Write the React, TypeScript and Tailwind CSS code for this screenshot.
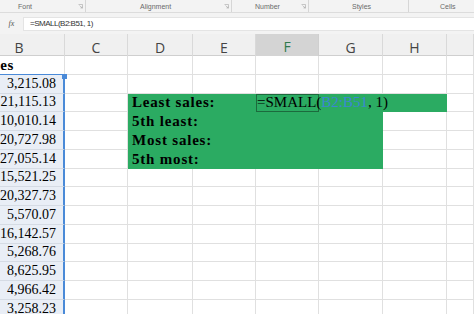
import React from "react";

const Launcher = () => (
  <svg width="5" height="5" viewBox="0 0 5 5" className="block">
    <path d="M0.5 0.5 H4.5 V4.5" fill="none" stroke="#a8a8a8" strokeWidth="0.6" />
    <path d="M1.5 1.5 L4 4 M2.5 4 H4 V2.5" fill="none" stroke="#a8a8a8" strokeWidth="0.6" />
  </svg>
);

function Ribbon() {
  return (
    <div className="h-[13px] shrink-0 bg-[#f3f3f3] border-b border-[#dcdcdc] flex items-center text-[7px] leading-[7px] text-[#6a6a6a] font-['Liberation_Sans',sans-serif]">
      <div className="w-[86px] h-full flex items-center border-r border-[#d6d6d6]">
        <span className="ml-[18px]">Font</span>
        <div className="flex-1" />
        <div className="mr-[2px]"><Launcher /></div>
      </div>
      <div className="w-[146px] h-full flex items-center border-r border-[#d6d6d6]">
        <span className="ml-[54px]">Alignment</span>
        <div className="flex-1" />
        <div className="mr-[2px]"><Launcher /></div>
      </div>
      <div className="w-[77px] h-full flex items-center border-r border-[#d6d6d6]">
        <span className="ml-[23px]">Number</span>
        <div className="flex-1" />
        <div className="mr-[2px]"><Launcher /></div>
      </div>
      <div className="w-[100px] h-full flex items-center border-r border-[#d6d6d6]">
        <span className="ml-[43px]">Styles</span>
      </div>
      <div className="flex-1 h-full flex items-center">
        <span className="ml-[31px]">Cells</span>
      </div>
    </div>
  );
}

function FormulaBar() {
  return (
    <div className="h-[21px] shrink-0 bg-[#f3f3f3] flex items-start pt-[4px]">
      <div className="w-[23px] h-[14px] flex items-center justify-center">
        <span className="italic text-[8px] leading-[8px] text-[#555] font-['Liberation_Serif',serif]">fx</span>
      </div>
      <div className="flex-1 h-[14px] bg-white border-y border-l border-[#e4e4e4] flex items-center pl-[6px]">
        <span className="text-[8px] leading-[8px] tracking-[-0.5px] text-[#333] font-['Liberation_Sans',sans-serif]">
          =SMALL(B2:B51, 1)
        </span>
      </div>
    </div>
  );
}

const HEAD = ["B", "C", "D", "E", "F", "G", "H", ""];

const NUMS: Record<number, string> = {
  2: "3,215.08",
  3: "21,115.13",
  4: "10,010.14",
  5: "20,727.98",
  6: "27,055.14",
  7: "15,521.25",
  8: "20,327.73",
  9: "5,570.07",
  10: "16,142.57",
  11: "5,268.76",
  12: "8,625.95",
  13: "4,966.42",
  14: "3,258.23",
};

const LABELS: Record<number, string> = {
  3: "Least sales:",
  4: "5th least:",
  5: "Most sales:",
  6: "5th most:",
};

const isGreen = (r: number, c: number) =>
  (r === 3 && c >= 2 && c <= 6) || (r >= 4 && r <= 6 && c >= 2 && c <= 5);

function Cell({ r, c }: { r: number; c: number }) {
  const serif = "font-['Liberation_Serif',serif] text-black";
  if (c === 0) {
    if (r === 1) {
      return (
        <div className="border-r border-b border-r-[#e0e0e0] border-b-[#4a8ad8] bg-white overflow-hidden flex items-end justify-end pr-[50px]">
          <span className={`${serif} whitespace-nowrap text-[15px] leading-[15px] pb-[1px] font-bold tracking-[0.6px]`}>Sales</span>
        </div>
      );
    }
    return (
      <div className="border-b border-r-2 border-b-[#d5dbe4] border-r-[#4a8ad8] bg-[#e9eef6] overflow-hidden flex items-end justify-end pr-[7px]">
        <span className={`${serif} whitespace-nowrap text-[14px] leading-[14px] pb-[2px]`}>{NUMS[r]}</span>
      </div>
    );
  }
  const green = isGreen(r, c);
  const cls = green
    ? "bg-[#2bab62] border-r border-b border-[#2bab62]"
    : "bg-white border-r border-b border-[#e0e0e0]";
  let content: React.ReactNode = null;
  if (c === 2 && LABELS[r]) {
    content = (
      <span className={`${serif} relative z-10 whitespace-nowrap text-[15px] leading-[15px] pb-[1px] pl-[4px] font-bold tracking-[0.8px]`}>
        {LABELS[r]}
      </span>
    );
  }
  if (c === 4 && r === 3) {
    return (
      <div className={`${cls} flex items-end outline outline-1 -outline-offset-1 outline-[#1c6a3d]`}>
        <span className={`${serif} relative z-10 whitespace-nowrap text-[15px] leading-[15px] pb-[1px] pl-[1px]`}>
          =SMALL(<span className="text-[#3d86d3]">B2:B51</span>, 1)
        </span>
      </div>
    );
  }
  return <div className={`${cls} flex items-end`}>{content}</div>;
}

function Grid() {
  const rows = Array.from({ length: 14 }, (_, i) => i + 1);
  return (
    <div className="relative flex flex-col">
      <div className="grid grid-cols-[65px_63px_65px_63px_63px_64px_64px_27px] h-[22px] bg-[#f0f0f0] border-b border-[#cfcfcf]">
        {HEAD.map((h, i) =>
          i === 4 ? (
            <div key={i} className="bg-[#d4d4d4] border-r border-[#cfcfcf] border-b-2 border-b-[#217346] -mb-px flex items-center justify-center pt-[2px] text-[14px] text-[#2f7a4d] font-['Open_Sans',sans-serif]">
              {h}
            </div>
          ) : (
            <div key={i} className={`border-r border-[#d9d9d9] flex items-center justify-center pt-[2px] text-[14px] text-[#444] font-['Open_Sans',sans-serif] ${i === 0 ? "pl-0" : ""}`}>
              <span className={i === 0 ? "-ml-[26px]" : ""}>{h}</span>
            </div>
          )
        )}
      </div>
      {rows.map((r) => (
        <div key={r} className="grid grid-cols-[65px_63px_65px_63px_63px_64px_64px_27px] h-[18.75px] shrink-0">
          {HEAD.map((_, c) => (
            <Cell key={c} r={r} c={c} />
          ))}
        </div>
      ))}
      <div className="absolute left-[62px] top-[40px] w-[5px] h-[5px] bg-[#4a8ad8] z-20" />
    </div>
  );
}

export default function App() {
  return (
    <div className="w-[474px] h-[314px] overflow-hidden bg-white flex flex-col">
      <Ribbon />
      <FormulaBar />
      <Grid />
    </div>
  );
}
